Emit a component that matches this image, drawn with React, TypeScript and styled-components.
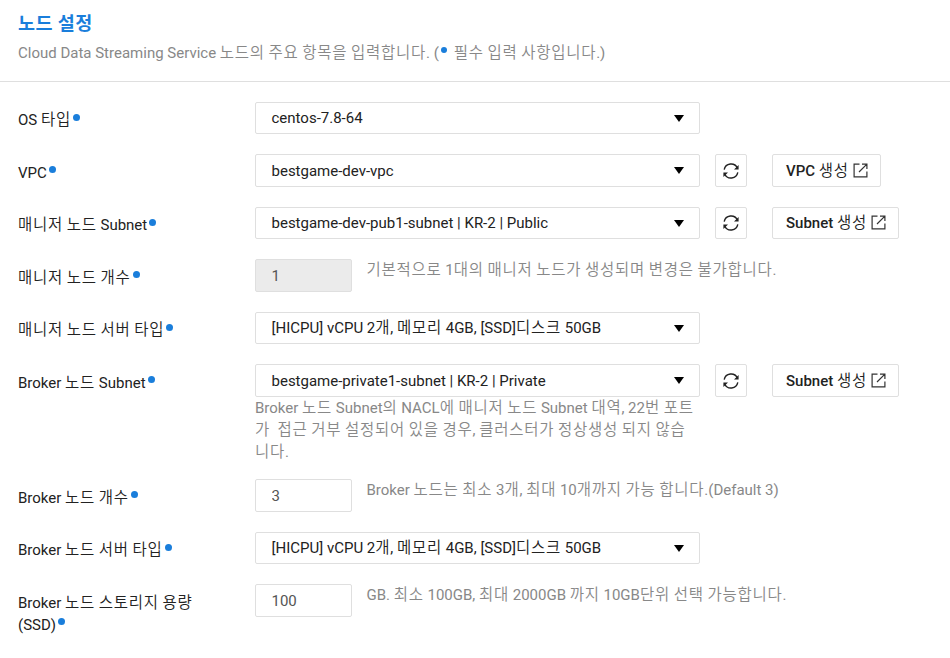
import React from 'react';
import styled, { createGlobalStyle } from 'styled-components';

type FieldLabelProps = {
  text: string;
};

type SelectFieldProps = {
  value: string;
};

const COLORS = {
  PRIMARY: '#1a7edb',
  TEXT: '#222222',
  INPUT: '#555555',
  GUIDE: '#888888',
  BORDER: '#dfdfdf',
  DISABLED: '#ebebeb',
};

const GlobalStyle = createGlobalStyle`
  * {
    box-sizing: border-box;
  }

  body {
    margin: 0;
    background-color: #ffffff;
    color: ${COLORS.TEXT};
    font-family: Roboto, 'Noto Sans CJK KR', sans-serif;
    font-size: 15px;
    line-height: 22px;
  }
`;

const Header = styled.header`
  height: 82px;
  padding: 12px 18px 0;
  border-bottom: 1px solid ${COLORS.BORDER};
`;

const Title = styled.h2`
  margin: 0;
  color: ${COLORS.PRIMARY};
  font-size: 18.5px;
  font-weight: 700;
  letter-spacing: 0.4px;
  line-height: 24px;
`;

const Description = styled.p`
  margin: 6px 0 0;
  color: ${COLORS.GUIDE};
`;

const Hangul = styled.span`
  font-size: 15.5px;
  font-weight: 350;
  letter-spacing: 0.74px;
  line-height: 1;
`;

const Dot = styled.i`
  display: inline-block;
  width: 7px;
  height: 7px;
  margin-left: 2px;
  border-radius: 50%;
  background-color: ${COLORS.PRIMARY};
  vertical-align: 4.5px;
`;

const DescriptionDot = styled(Dot)`
  width: 6px;
  height: 6px;
  margin-right: 3px;
  vertical-align: 5px;
`;

const Form = styled.form`
  display: flex;
  flex-direction: column;
  gap: 20px;
  padding: 19.9px 18px 0;
`;

const Row = styled.div`
  display: grid;
  grid-template-columns: 237px 1fr;
  min-height: 32.5px;
`;

const Label = styled.label`
  width: 190px;
  padding-top: 7.3px;
`;

const Controls = styled.div`
  display: flex;
  align-items: flex-start;
`;

const SelectColumn = styled.div`
  width: 445px;
`;

const Select = styled.div`
  display: flex;
  align-items: center;
  justify-content: space-between;
  height: 32.5px;
  padding: 0 15.5px;
  border: 1px solid ${COLORS.BORDER};
  border-radius: 2px;
`;

const Caret = styled.span`
  border: 5.5px solid transparent;
  border-top: 7px solid #000000;
  border-bottom: 0;
`;

const RefreshButton = styled.button`
  display: flex;
  align-items: center;
  justify-content: center;
  width: 32px;
  height: 32.5px;
  margin-left: 15px;
  padding: 0;
  border: 1px solid ${COLORS.BORDER};
  border-radius: 2px;
  background-color: #ffffff;
`;

const CreateButton = styled.button`
  display: flex;
  align-items: center;
  height: 32.5px;
  margin-left: 25px;
  padding: 0 12px 0 13px;
  border: 1px solid ${COLORS.BORDER};
  border-radius: 2px;
  background-color: #ffffff;
  color: ${COLORS.TEXT};
  font: inherit;
  font-weight: 500;

  svg {
    margin: -1px 0 0 4px;
  }
`;

const NumberInput = styled.input`
  width: 97px;
  height: 32.5px;
  padding: 0 15.5px;
  border: 1px solid ${COLORS.BORDER};
  border-radius: 2px;
  background-color: #ffffff;
  color: ${COLORS.INPUT};
  font: inherit;

  &:disabled {
    background-color: ${COLORS.DISABLED};
  }
`;

const Guide = styled.span`
  margin: -0.5px 0 0 14.5px;
  color: ${COLORS.GUIDE};
`;

const Notice = styled.div`
  height: 62.5px;
  color: ${COLORS.GUIDE};
  white-space: pre;
`;

// Hangul runs are set lighter and wider than the latin text around them
const Mixed = ({ text }: { text: string }) => (
  <span>
    {text.split(/([가-힣]+)/).map((part, index) => (index % 2 ? <Hangul key={index}>{part}</Hangul> : part))}
  </span>
);

const RefreshIcon = () => (
  <svg width='18' height='18' viewBox='0 0 18 18' fill='none' stroke='#222' strokeWidth='1.4'>
    <path d='M2.2 7.6A7 7 0 0 1 15.4 6M15.8 10.4A7 7 0 0 1 2.6 12' />
    <path d='M16.6 3v4.6h-4.6zM1.4 15v-4.6h4.6z' fill='#222' stroke='none' />
  </svg>
);

const ExternalIcon = () => (
  <svg width='15' height='15' viewBox='0 0 15 15' fill='none' stroke='#333' strokeWidth='1.2'>
    <path d='M6.5 1.1H1.1v12.8h12.8V8.5M9 1.1h4.9V6M13.9 1.1L6 9' />
  </svg>
);

const FieldLabel: React.FC<FieldLabelProps> = ({ text }: FieldLabelProps) => (
  <Label>
    <Mixed text={text} />
    <Dot />
  </Label>
);

const SelectField: React.FC<SelectFieldProps> = ({ value }: SelectFieldProps) => (
  <Select>
    <Mixed text={value} />
    <Caret />
  </Select>
);

const rows = [
  { label: 'OS 타입', select: 'centos-7.8-64' },
  { label: 'VPC', select: 'bestgame-dev-vpc', create: 'VPC 생성' },
  { label: '매니저 노드 Subnet', select: 'bestgame-dev-pub1-subnet | KR-2 | Public', create: 'Subnet 생성' },
  { label: '매니저 노드 개수', input: '1', disabled: true, guide: '기본적으로 1대의 매니저 노드가 생성되며 변경은 불가합니다.' },
  { label: '매니저 노드 서버 타입', select: '[HICPU] vCPU 2개, 메모리 4GB, [SSD]디스크 50GB' },
  {
    label: 'Broker 노드 Subnet',
    select: 'bestgame-private1-subnet | KR-2 | Private',
    create: 'Subnet 생성',
    notice:
      'Broker 노드 Subnet의 NACL에 매니저 노드 Subnet 대역, 22번 포트\n가\u00a0 접근 거부 설정되어 있을 경우, 클러스터가 정상생성 되지 않습\n니다.',
  },
  { label: 'Broker 노드 개수', input: '3', guide: 'Broker 노드는 최소 3개, 최대 10개까지 가능 합니다.(Default 3)' },
  { label: 'Broker 노드 서버 타입', select: '[HICPU] vCPU 2개, 메모리 4GB, [SSD]디스크 50GB' },
  { label: 'Broker 노드 스토리지 용량 (SSD)', input: '100', guide: 'GB. 최소 100GB, 최대 2000GB 까지 10GB단위 선택 가능합니다.' },
];

const App = () => (
  <>
    <GlobalStyle />
    <Header>
      <Title>노드 설정</Title>
      <Description>
        <Mixed text='Cloud Data Streaming Service 노드의 주요 항목을 입력합니다. (' />
        <DescriptionDot />
        <Mixed text=' 필수 입력 사항입니다.)' />
      </Description>
    </Header>
    <Form>
      {rows.map(({ label, select, create, input, disabled, guide, notice }) => (
        <Row key={label}>
          <FieldLabel text={label} />
          <Controls>
            {select && (
              <SelectColumn>
                <SelectField value={select} />
                {notice && (
                  <Notice>
                    <Mixed text={notice} />
                  </Notice>
                )}
              </SelectColumn>
            )}
            {create && (
              <>
                <RefreshButton type='button' aria-label='refresh'>
                  <RefreshIcon />
                </RefreshButton>
                <CreateButton type='button'>
                  <Mixed text={create} />
                  <ExternalIcon />
                </CreateButton>
              </>
            )}
            {input && <NumberInput defaultValue={input} disabled={disabled} />}
            {guide && (
              <Guide>
                <Mixed text={guide} />
              </Guide>
            )}
          </Controls>
        </Row>
      ))}
    </Form>
  </>
);

export default App;
